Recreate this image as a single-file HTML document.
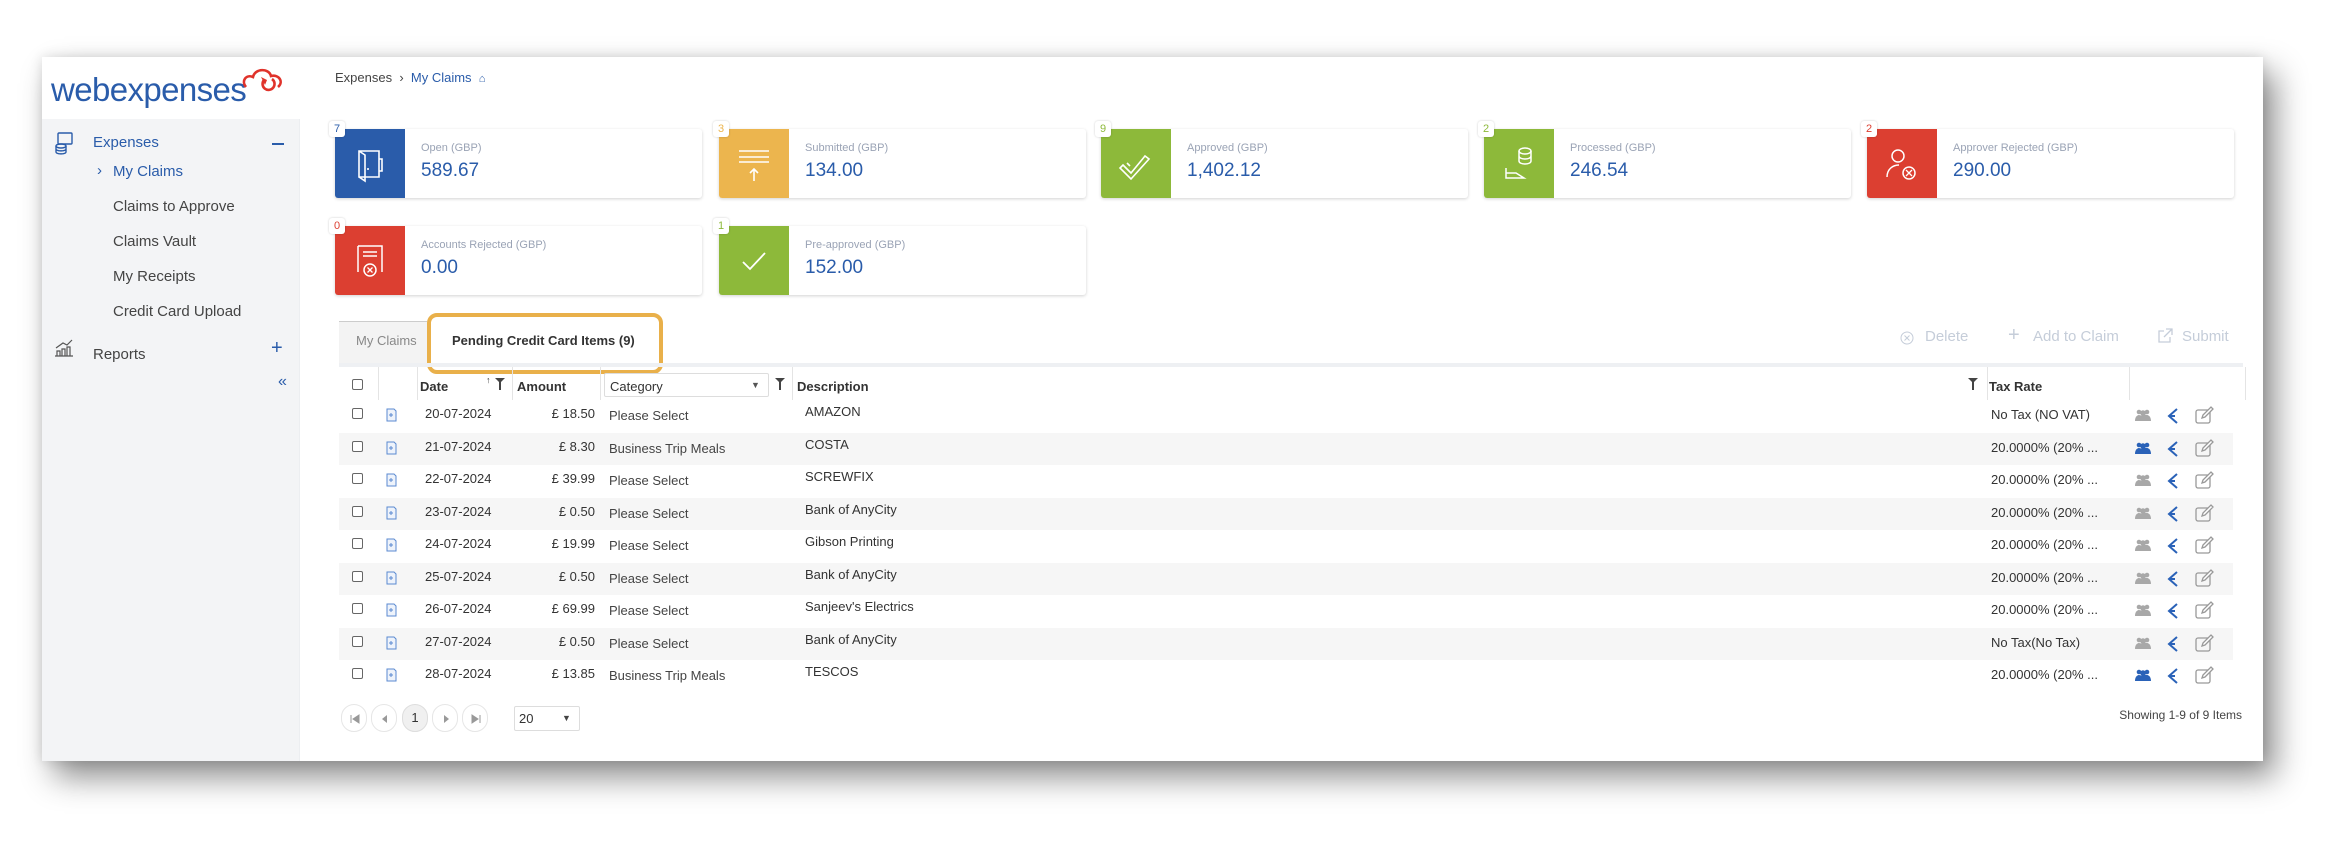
<!DOCTYPE html>
<html><head><meta charset="utf-8">
<style>
*{box-sizing:border-box;margin:0;padding:0}
body{width:2340px;height:860px;background:#fff;font-family:"Liberation Sans",sans-serif;position:relative;overflow:hidden;color:#333}
.win{position:absolute;left:42px;top:57px;width:2221px;height:704px;background:#fff;box-shadow:12px 16px 30px rgba(0,0,0,.45),0 0 12px rgba(0,0,0,.12)}
.side{position:absolute;left:0;top:0;width:258px;height:704px;background:#f3f4f6;border-right:1px solid #eceef1}
.logo{position:absolute;left:0;top:0;width:258px;height:62px;background:#fff}
.abs{position:absolute;white-space:nowrap}
.nav{font-size:15px;color:#444}
.card{position:absolute;width:367px;height:69px;background:#fff;border-radius:3px;box-shadow:0 1px 3px rgba(0,0,0,.18)}
.card .ic{position:absolute;left:0;top:0;width:70px;height:69px;border-radius:3px 0 0 3px}
.card .lb{position:absolute;left:86px;top:13px;font-size:11px;color:#9aa3b5}
.card .v{position:absolute;left:86px;top:31px;font-size:19px;color:#2a5caa}
.card .bd{position:absolute;left:-6px;top:-8px;width:16px;height:16px;background:#fff;border-radius:3px;font-size:11px;text-align:center;line-height:16px;box-shadow:0 0 2px rgba(0,0,0,.2)}
.row{position:absolute;left:297px;width:1904px;height:32.5px;font-size:13px}
.row.g{background:#f6f6f6}
.cb{position:absolute;width:11px;height:11px;border:1px solid #666;border-radius:2px;background:#fff}
.pg{position:absolute;top:704px;width:26px;height:28px;border:1px solid #e6e6e6;border-radius:14px}
.pg svg{position:absolute;left:8px;top:9px}
</style></head><body>
<div class="win">
 <div class="side">
  <div class="logo">
   <div class="abs" style="left:9px;top:14px;font-size:33px;color:#2a5caa;letter-spacing:-0.6px">webexpenses</div>
   <svg class="abs" style="left:199px;top:9px" width="46" height="28" viewBox="0 0 46 28"><path d="M5 21 C0 15 5 8 12 11 C14 2 28 2 30 10 C38 8 43 16 37 21" fill="none" stroke="#e0332b" stroke-width="2.6"/><path d="M23 14 a6 6 0 1 0 8 -1" fill="none" stroke="#e0332b" stroke-width="2.6"/><path d="M20 11 l6 3 l-2 5z" fill="#e0332b"/></svg>
  </div>
  <svg class="abs" style="left:12px;top:74px" width="20" height="24" viewBox="0 0 20 24"><rect x="4" y="2" width="14" height="11" rx="1" fill="none" stroke="#2a5caa" stroke-width="1.4"/><ellipse cx="7" cy="15" rx="5" ry="2" fill="none" stroke="#2a5caa" stroke-width="1.4"/><path d="M2 15v6c0 2.5 10 2.5 10 0v-6M2 18c0 2.5 10 2.5 10 0" fill="none" stroke="#2a5caa" stroke-width="1.4"/></svg>
  <div class="abs nav" style="left:51px;top:77px;color:#2a5caa">Expenses</div>
  <div class="abs" style="left:230px;top:86px;width:12px;height:1.5px;background:#2a5caa"></div>
  <div class="abs nav" style="left:55px;top:105px;color:#2a5caa">›</div>
  <div class="abs nav" style="left:71px;top:106px;color:#2a5caa">My Claims</div>
  <div class="abs nav" style="left:71px;top:141px">Claims to Approve</div>
  <div class="abs nav" style="left:71px;top:176px">Claims Vault</div>
  <div class="abs nav" style="left:71px;top:211px">My Receipts</div>
  <div class="abs nav" style="left:71px;top:246px">Credit Card Upload</div>
  <svg class="abs" style="left:12px;top:282px" width="20" height="18" viewBox="0 0 20 18"><path d="M1 17h18M3 17v-5h3v5M8 17v-7h3v7M13 17v-9h3v9M2 9l7-5 4 2 5-5" fill="none" stroke="#555" stroke-width="1.2"/></svg>
  <div class="abs nav" style="left:51px;top:289px">Reports</div>
  <div class="abs" style="left:229px;top:280px;font-size:20px;color:#2a5caa">+</div>
  <div class="abs" style="left:236px;top:316px;font-size:16px;color:#2a5caa">«</div>
 </div>
 <div class="abs" style="left:293px;top:13px;font-size:13px;color:#444">Expenses &nbsp;›&nbsp; <span style="color:#2a5caa">My Claims</span> &nbsp;<span style="color:#2a5caa;font-size:11px">⌂</span></div>
</div>

<div class="card" style="left:335px;top:129px"><div class="ic" style="background:#2a5caa"><svg width="70" height="69"><path d="M24 22h20v26h-20z M24 22 l6 4v26l-6-4 M44 30h3v12h-3 M33 39v2" fill="none" stroke="#fff" stroke-width="1.6"/></svg></div><div class="bd" style="color:#2a5caa">7</div><div class="lb">Open (GBP)</div><div class="v">589.67</div></div>
<div class="card" style="left:719px;top:129px"><div class="ic" style="background:#ecb54e"><svg width="70" height="69"><path d="M20 22h30M20 28h30M20 33h30M35 52v-12M31 44l4-4 4 4" fill="none" stroke="#fff" stroke-width="1.6"/></svg></div><div class="bd" style="color:#ecb54e">3</div><div class="lb">Submitted (GBP)</div><div class="v">134.00</div></div>
<div class="card" style="left:1101px;top:129px"><div class="ic" style="background:#8db93a"><svg width="70" height="69"><path d="M22 36l8 8 14-17 4 3-18 20-11-11z M26 34l3 3" fill="none" stroke="#fff" stroke-width="1.6"/></svg></div><div class="bd" style="color:#8db93a">9</div><div class="lb">Approved (GBP)</div><div class="v">1,402.12</div></div>
<div class="card" style="left:1484px;top:129px"><div class="ic" style="background:#8db93a"><svg width="70" height="69"><ellipse cx="41" cy="22" rx="6" ry="3" fill="none" stroke="#fff" stroke-width="1.5"/><path d="M35 22v10c0 4 12 4 12 0v-10M35 27c0 4 12 4 12 0M22 44h10l8 5h-18z M22 39v10" fill="none" stroke="#fff" stroke-width="1.5"/></svg></div><div class="bd" style="color:#8db93a">2</div><div class="lb">Processed (GBP)</div><div class="v">246.54</div></div>
<div class="card" style="left:1867px;top:129px"><div class="ic" style="background:#dc3f31"><svg width="70" height="69"><circle cx="31" cy="27" r="6" fill="none" stroke="#fff" stroke-width="1.5"/><path d="M20 48c0-8 6-12 12-12" fill="none" stroke="#fff" stroke-width="1.5"/><circle cx="42" cy="44" r="6" fill="none" stroke="#fff" stroke-width="1.5"/><path d="M39 41l6 6M45 41l-6 6" stroke="#fff" stroke-width="1.3"/></svg></div><div class="bd" style="color:#dc3f31">2</div><div class="lb">Approver Rejected (GBP)</div><div class="v">290.00</div></div>
<div class="card" style="left:335px;top:226px"><div class="ic" style="background:#dc3f31"><svg width="70" height="69"><path d="M23 20h24v26M23 20v26M28 26h14M28 30h14" fill="none" stroke="#fff" stroke-width="1.5"/><circle cx="35" cy="44" r="6" fill="none" stroke="#fff" stroke-width="1.5"/><path d="M32.5 41.5l5 5M37.5 41.5l-5 5" stroke="#fff" stroke-width="1.3"/></svg></div><div class="bd" style="color:#dc3f31">0</div><div class="lb">Accounts Rejected (GBP)</div><div class="v">0.00</div></div>
<div class="card" style="left:719px;top:226px"><div class="ic" style="background:#8db93a"><svg width="70" height="69"><path d="M24 36l7 7 15-16" fill="none" stroke="#fff" stroke-width="1.8"/></svg></div><div class="bd" style="color:#8db93a">1</div><div class="lb">Pre-approved (GBP)</div><div class="v">152.00</div></div>

<div class="abs" style="left:339px;top:321px;width:88px;height:42px;background:#f3f3f3;border-top:1px solid #ccc"></div>
<div class="abs" style="left:356px;top:333px;font-size:13px;color:#888">My Claims</div>
<div class="abs" style="left:427px;top:313px;width:236px;height:61px;border:4px solid #e9b04a;border-radius:10px"></div>
<div class="abs" style="left:452px;top:333px;font-size:13px;color:#333;font-weight:bold">Pending Credit Card Items (9)</div>
<div class="abs" style="left:339px;top:363px;width:1904px;height:4px;background:#eef0f3"></div>
<svg class="abs" style="left:1900px;top:331px" width="14" height="14"><circle cx="7" cy="7" r="6" fill="none" stroke="#c5cdd9"/><path d="M4.5 4.5l5 5M9.5 4.5l-5 5" stroke="#c5cdd9"/></svg>
<div class="abs" style="left:1925px;top:328px;font-size:15px;color:#c5cdd9">Delete</div>
<div class="abs" style="left:2008px;top:324px;font-size:20px;color:#c5cdd9">+</div>
<div class="abs" style="left:2033px;top:328px;font-size:15px;color:#c5cdd9">Add to Claim</div>
<svg class="abs" style="left:2157px;top:328px" width="16" height="16"><path d="M7 3H2v11h11V9M9 1h6v6M15 1L7 9" fill="none" stroke="#c5cdd9" stroke-width="1.3"/></svg>
<div class="abs" style="left:2182px;top:328px;font-size:15px;color:#c5cdd9">Submit</div>

<div class="cb" style="left:352px;top:379px"></div>
<div class="abs" style="left:378px;top:367px;width:1px;height:33px;background:#e4e4e4"></div>
<div class="abs" style="left:417px;top:367px;width:1px;height:33px;background:#e4e4e4"></div>
<div class="abs" style="left:512px;top:367px;width:1px;height:33px;background:#e4e4e4"></div>
<div class="abs" style="left:600px;top:367px;width:1px;height:33px;background:#e4e4e4"></div>
<div class="abs" style="left:792px;top:367px;width:1px;height:33px;background:#e4e4e4"></div>
<div class="abs" style="left:1987px;top:367px;width:1px;height:33px;background:#e4e4e4"></div>
<div class="abs" style="left:2129px;top:367px;width:1px;height:33px;background:#e4e4e4"></div>
<div class="abs" style="left:2245px;top:367px;width:1px;height:33px;background:#e4e4e4"></div>
<div class="abs" style="left:420px;top:379px;font-size:13px;font-weight:bold">Date</div>
<div class="abs" style="left:486px;top:375px;font-size:9px">↑</div>
<svg class="abs" style="left:495px;top:378px" width="10" height="12"><path d="M0 0h10L6 4v8H4V4z" fill="#444"/></svg>
<div class="abs" style="left:517px;top:379px;font-size:13px;font-weight:bold">Amount</div>
<div class="abs" style="left:604px;top:373px;width:165px;height:24px;border:1px solid #ddd;border-radius:2px"></div>
<div class="abs" style="left:610px;top:379px;font-size:13px">Category</div>
<div class="abs" style="left:751px;top:380px;font-size:9px;color:#555">▼</div>
<svg class="abs" style="left:775px;top:378px" width="10" height="12"><path d="M0 0h10L6 4v8H4V4z" fill="#444"/></svg>
<div class="abs" style="left:797px;top:379px;font-size:13px;font-weight:bold">Description</div>
<svg class="abs" style="left:1968px;top:378px" width="10" height="12"><path d="M0 0h10L6 4v8H4V4z" fill="#444"/></svg>
<div class="abs" style="left:1989px;top:379px;font-size:13px;font-weight:bold">Tax Rate</div>

<div class="row g" style="top:432.5px;left:339px;width:1894px"></div>
<div class="row g" style="top:497.5px;left:339px;width:1894px"></div>
<div class="row g" style="top:562.5px;left:339px;width:1894px"></div>
<div class="row g" style="top:627.5px;left:339px;width:1894px"></div>

<div id="rows"></div>
<script>
var d=[["20-07-2024","£ 18.50","Please Select","AMAZON","No Tax (NO VAT)",0],
["21-07-2024","£ 8.30","Business Trip Meals","COSTA","20.0000% (20% ...",1],
["22-07-2024","£ 39.99","Please Select","SCREWFIX","20.0000% (20% ...",0],
["23-07-2024","£ 0.50","Please Select","Bank of AnyCity","20.0000% (20% ...",0],
["24-07-2024","£ 19.99","Please Select","Gibson Printing","20.0000% (20% ...",0],
["25-07-2024","£ 0.50","Please Select","Bank of AnyCity","20.0000% (20% ...",0],
["26-07-2024","£ 69.99","Please Select","Sanjeev's Electrics","20.0000% (20% ...",0],
["27-07-2024","£ 0.50","Please Select","Bank of AnyCity","No Tax(No Tax)",0],
["28-07-2024","£ 13.85","Business Trip Meals","TESCOS","20.0000% (20% ...",1]];
var h="";
d.forEach(function(r,i){var y=400+i*32.5;var c=y+16;
h+='<div class="cb" style="left:352px;top:'+(c-8)+'px"></div>';
h+='<svg class="abs" style="left:386px;top:'+(c-8)+'px" width="11" height="14"><path d="M1 1h7l2 2v10h-9z" fill="#eef3fb" stroke="#5b8ad0"/><path d="M5 5v4M3 7h4" stroke="#5b8ad0"/></svg>';
h+='<div class="abs" style="left:425px;top:'+(c-10)+'px;font-size:13px;color:#333">'+r[0]+'</div>';
h+='<div class="abs" style="right:'+(2340-595)+'px;top:'+(c-10)+'px;font-size:13px;color:#333">'+r[1]+'</div>';
h+='<div class="abs" style="left:609px;top:'+(c-8)+'px;font-size:13px;color:#444">'+r[2]+'</div>';
h+='<div class="abs" style="left:805px;top:'+(c-12)+'px;font-size:13px;color:#333">'+r[3]+'</div>';
h+='<div class="abs" style="left:1991px;top:'+(c-9)+'px;font-size:13px;color:#333">'+r[4]+'</div>';
var pc=r[5]?"#2a62b8":"#a8a8a8";
h+='<svg class="abs" style="left:2135px;top:'+(c-8)+'px" width="16" height="14"><circle cx="4" cy="4" r="2.3" fill="'+pc+'"/><circle cx="12" cy="4" r="2.3" fill="'+pc+'"/><circle cx="8" cy="5" r="2.8" fill="'+pc+'"/><path d="M0 13c0-5 3-6 4-6s3 1 4 0 3 0 4 0 4 1 4 6z" fill="'+pc+'"/></svg>';
h+='<svg class="abs" style="left:2167px;top:'+(c-8)+'px" width="12" height="16"><path d="M10 1L2 8l8 7M2 8h6" fill="none" stroke="#2a62b8" stroke-width="2"/></svg>';
h+='<svg class="abs" style="left:2195px;top:'+(c-10)+'px" width="20" height="18"><rect x="1" y="4" width="14" height="13" rx="2" fill="none" stroke="#999" stroke-width="1.3"/><path d="M7 12l1-3 8-8 2 2-8 8z" fill="#fff" stroke="#999" stroke-width="1.3"/></svg>';
});
document.getElementById("rows").innerHTML=h;
</script>

<div class="pg" style="left:341px"><svg width="10" height="10"><path d="M1 1v8M9 1L3 5l6 4z" fill="#999" stroke="#999"/></svg></div>
<div class="pg" style="left:371px"><svg width="10" height="10"><path d="M7 1L2 5l5 4z" fill="#999"/></svg></div>
<div class="abs" style="left:402px;top:704px;width:26px;height:28px;border:1px solid #ddd;background:#f0f0f0;border-radius:14px;font-size:13px;color:#333;text-align:center;line-height:26px">1</div>
<div class="pg" style="left:432px"><svg width="10" height="10"><path d="M3 1l5 4-5 4z" fill="#999"/></svg></div>
<div class="pg" style="left:462px"><svg width="10" height="10"><path d="M9 1v8M1 1l6 4-6 4z" fill="#999" stroke="#999"/></svg></div>
<div class="abs" style="left:514px;top:706px;width:66px;height:25px;border:1px solid #ddd;border-radius:2px"></div>
<div class="abs" style="left:519px;top:711px;font-size:13px">20</div>
<div class="abs" style="left:562px;top:713px;font-size:9px;color:#444">▼</div>
<div class="abs" style="right:98px;top:708px;font-size:12px;color:#444">Showing 1-9 of 9 Items</div>
</body></html>
